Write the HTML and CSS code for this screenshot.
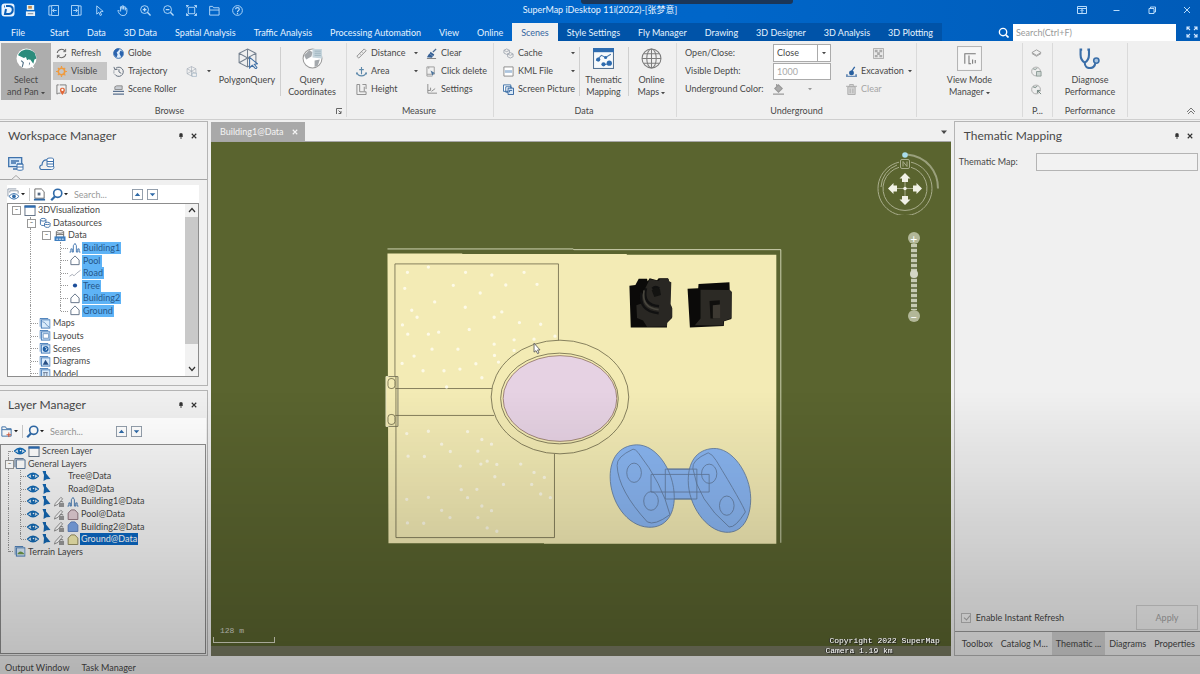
FILE: index.html
```html
<!DOCTYPE html>
<html lang="en">
<head>
<meta charset="utf-8">
<title>SuperMap iDesktop 11i(2022)</title>
<link rel="stylesheet" href="styles.css">
</head>
<body>
<svg class="defs" aria-hidden="true">
  <symbol id="caret" viewBox="0 0 6 6"><path d="M0 1.500h6L3 5z" fill="currentColor"/></symbol>
  <symbol id="close" viewBox="0 0 8 8"><path d="M1 1l6 6M7 1L1 7" stroke="currentColor" stroke-width="1.500" fill="none"/></symbol>
  <symbol id="pin" viewBox="0 0 8 8"><path d="M2.500 1h3v3h-3zM1.500 4.500h5M4 4.500V8" stroke="currentColor" stroke-width="1.200" fill="currentColor"/></symbol>
  <symbol id="magnifier" viewBox="0 0 16 16"><circle cx="9.500" cy="6.500" r="5" fill="none" stroke="currentColor" stroke-width="2"/><path d="M6 10.500L1.500 15" stroke="currentColor" stroke-width="2.800"/></symbol>
  <symbol id="up" viewBox="0 0 12 12"><rect x=".5" y=".5" width="11" height="11" fill="#fff" stroke="#8c98a6"/><path d="M3 7.500l3-3.500 3 3.500z" fill="#2f6aa8"/></symbol>
  <symbol id="down" viewBox="0 0 12 12"><rect x=".5" y=".5" width="11" height="11" fill="#fff" stroke="#8c98a6"/><path d="M3 4.500l3 3.500 3-3.500z" fill="#2f6aa8"/></symbol>
  <symbol id="window" viewBox="0 0 12 12"><rect x=".5" y="1" width="11" height="10.500" fill="#fff" stroke="#5b6b80"/><path d="M0 .5h12v2.500H0z" fill="#2d6bb0"/></symbol>
  <symbol id="house" viewBox="0 0 12 12"><path d="M1.500 10.500V5.500L6 1l4.500 4.500v5z" fill="#fff" stroke="#5c6c82"/></symbol>
  <symbol id="model" viewBox="0 0 12 12"><path d="M0 11h1.500V7.500H3V11h1.200V4L6 1.500 7.500 4v7H9V7.500h1.500V11H12" fill="none" stroke="#2d67a8" stroke-width=".9"/></symbol>
  <symbol id="road" viewBox="0 0 12 12"><path d="M0 9l3-2 2 1.500L8 5.500 12 2.500" fill="none" stroke="#a3a9b3"/></symbol>
  <symbol id="dot" viewBox="0 0 12 12"><circle cx="6" cy="6" r="2.300" fill="#1d4e9a"/></symbol>
  <symbol id="pages" viewBox="0 0 12 12"><path d="M.5 9.500v-9h9" fill="none" stroke="#3b75b5"/><rect x="2" y="2" width="9.500" height="9" fill="#d9ebfb" stroke="#3b75b5"/></symbol>
  <symbol id="sources" viewBox="0 0 12 12"><g fill="#fff" stroke="#3c6fa8"><path d="M1 3v5c0 1.800 6 1.800 6 0V3"/><ellipse cx="4" cy="3" rx="3" ry="1.500"/><path d="M5.500 7v3c0 1.800 6 1.800 6 0V7"/><ellipse cx="8.500" cy="7" rx="3" ry="1.300"/></g></symbol>
  <symbol id="db" viewBox="0 0 12 12"><path d="M2 2v6h8V2" fill="#fff" stroke="#666"/><ellipse cx="6" cy="2" rx="4" ry="1.500" fill="#fff" stroke="#666"/><path d="M2 5h8" stroke="#666"/><path d="M0 7h12v5H0z" fill="#3f7fc0"/><path d="M2 10h2M5 10h2M8 10h2" stroke="#fff"/></symbol>
  <symbol id="eye" viewBox="0 0 12 8"><path d="M.5 4Q6-1.500 11.500 4 6 9.500.5 4z" fill="#fff" stroke="#146bb5" stroke-width="1.300"/><circle cx="6" cy="4" r="2.400" fill="#146bb5"/><circle cx="6.500" cy="3.500" r=".8" fill="#fff"/></symbol>
  <symbol id="pick" viewBox="0 0 10 10"><path d="M1.500 0h3.500v2.500L9.500 8l-4 .3L2.500 10l.5-6z" fill="#1467b2"/></symbol>
  <symbol id="edit" viewBox="0 0 12 12"><path d="M1 11l1-3 6-6.500 2 1.500-5 6z" fill="#fff" stroke="#8d8d8d"/><path d="M6 7.500h5.500V12H6z" fill="#999"/><path d="M7.500 7V6h2.500v1" stroke="#888" fill="none"/></symbol>
  <symbol id="globe" viewBox="0 0 20 20"><circle cx="10" cy="10" r="9" fill="none" stroke="currentColor"/><ellipse cx="10" cy="10" rx="4.500" ry="9" fill="none" stroke="currentColor"/><path d="M1 10h18M10 1v18M2.500 5.500h15M2.500 14.500h15" stroke="currentColor" fill="none"/></symbol>
  <symbol id="cube" viewBox="0 0 20 20"><path d="M10 1l8 4v9l-8 4-8-4V5zM2 5l8 4.500L18 5M10 9.500V18M2 14l8-4.500M10 1v8.500l8 4.500" fill="none" stroke="currentColor"/></symbol>
  <symbol id="spin" viewBox="0 0 12 12"><path d="M1.300 5.500A4.800 4.800 0 0 1 10 3.500M10.700 6.500A4.800 4.800 0 0 1 2 8.500" fill="none" stroke="#666" stroke-width="1.100"/><path d="M10.500 1v3H8M1.500 11V8H4" fill="none" stroke="#666"/></symbol>
</svg>

<header class="chrome">
  <div class="titlebar">
    <div class="quick">
      <svg class="logo" viewBox="0 0 14 14"><rect x=".5" y=".5" width="13" height="13" rx="3" fill="#eaf5ff"/><path d="M5 3h3c5 0 5 7 0 8H4l1-5M3 3.500h.8" stroke="#0a5fb8" stroke-width="2" fill="none"/></svg>
      <button aria-label="Save"><svg viewBox="0 0 12 12"><path d="M2 0h8v5.500H2z" fill="#dff0f5"/><path d="M3.500 1h4v3h-4z" fill="#c48a4a"/><path d="M1 7h10v5H1z" fill="#e8f1f7"/><path d="M3 9.500h6" stroke="#6a7d92"/></svg></button>
      <button aria-label="Back"><svg viewBox="0 0 12 12"><path d="M4 1H1v10h3M4 .5h7.500v11H4zM9.500 6H5M7 4L5 6l2 2"/></svg></button>
      <button aria-label="Forward"><svg viewBox="0 0 12 12"><path d="M8 1h3v10H8M.5.5H8v11H.5zM2.500 6H7M5 4l2 2-2 2"/></svg></button>
      <button aria-label="Pointer"><svg viewBox="0 0 12 12"><path d="M3 1v9l2.300-2 1.500 3.500 1.500-.7L6.800 7.500 10 7z"/></svg></button>
      <button aria-label="Pan"><svg viewBox="0 0 12 12"><path d="M3 7L1.500 5.500C.5 6 1.500 8 3 10c1.500 2 6 2 7 0 1-2 1-5 .5-6.500H9V6M9 5V2H7.200v3M7.200 4V1H5.500v4M5.500 4V2H3.700l.3 5"/></svg></button>
      <button aria-label="Zoom in"><svg viewBox="0 0 12 12"><circle cx="5" cy="5" r="4.300"/><path d="M8 8l3.500 3.500M5 3v4M3 5h4" stroke-width="1.500"/></svg></button>
      <button aria-label="Zoom out"><svg viewBox="0 0 12 12"><circle cx="5" cy="5" r="4.300"/><path d="M8 8l3.500 3.500M3 5h4" stroke-width="1.500"/></svg></button>
      <button aria-label="Full extent"><svg viewBox="0 0 12 12"><path d="M2.500 2.500h7v7h-7zM0 3V.5h3M9 .5h2.500V3M11.500 9v2.500H9M3 11.500H.5V9M.5.5l2 2M11.500.5l-2 2M11.500 11.500l-2-2M.5 11.500l2-2"/></svg></button>
      <button aria-label="Open"><svg viewBox="0 0 12 12"><path d="M.7 11V1.500H4l1 1.500h6v8zM.7 5.500H11"/></svg></button>
      <button aria-label="Help"><svg viewBox="0 0 12 12"><circle cx="6" cy="6" r="5.300"/><path d="M4 4.700c0-2.500 4-2.300 4 0C8 6 6 6 6 7.500M6 8.500V10" stroke-width="1.300"/></svg></button>
    </div>
    <h1 class="app-title">SuperMap iDesktop 11i(2022)-[张梦意]</h1>
    <div class="win-controls">
      <button aria-label="Ribbon options"><svg viewBox="0 0 10 10"><path d="M.5 1.500h9v7h-9zM.5 3.500h9M5 8V4.500M3.500 6L5 4.500 6.500 6"/></svg></button>
      <button aria-label="Minimize"><svg viewBox="0 0 10 10"><path d="M1.500 5.500h6"/></svg></button>
      <button aria-label="Restore"><svg viewBox="0 0 10 10"><path d="M2 3.500h5v5H2zM3.500 3.500V2h5v5H7"/></svg></button>
      <button aria-label="Close"><svg viewBox="0 0 10 10"><path d="M2 2l6 6M8 2L2 8"/></svg></button>
    </div>
  </div>
  <div class="notch"></div>
  <nav class="tabs">
    <a class="file" href="#">File</a><a href="#">Start</a><a href="#">Data</a><a href="#">3D Data</a><a href="#">Spatial Analysis</a><a href="#">Traffic Analysis</a><a href="#">Processing Automation</a><a href="#">View</a><a href="#">Online</a><a class="active" href="#">Scenes</a>
    <div class="context"><a href="#">Style Settings</a><a href="#">Fly Manager</a><a href="#">Drawing</a><a href="#">3D Designer</a><a href="#">3D Analysis</a><a href="#">3D Plotting</a></div>
    <div class="find">
      <svg viewBox="0 0 12 12"><circle cx="5.500" cy="5.500" r="4" fill="none" stroke="#fff" stroke-width="1.500"/><path d="M8.500 8.500l3 3" stroke="#fff" stroke-width="1.800"/></svg>
      <input type="text" placeholder="Search(Ctrl+F)" aria-label="Search commands">
      <button aria-label="Full screen"><svg viewBox="0 0 12 12"><path d="M1 4V1h3M8 1h3v3M11 8v3H8M4 11H1V8M1 1l3 3M11 1L8 4M11 11L8 8M1 11l3-3" fill="none" stroke="#d5e9ff" stroke-width="1.100"/></svg></button>
    </div>
  </nav>
</header>

<section class="ribbon">
  <div class="group browse">
    <div class="tools">
      <button class="big pressed"><svg viewBox="0 0 20 20"><circle cx="10" cy="10" r="9.500" fill="#fff"/><path d="M2 7C4 1 13-1 18 5l1.500 5-2 1-1 4-3-4-3 .5-1-3-2 1z" fill="#2b8c7c"/><path d="M5 12l2 2-1 4M13 14l-1 3" stroke="#4a6a80" fill="none"/><path d="M12 11v7l2-2 3 3" fill="none" stroke="#fff"/></svg><span>Select<br>and Pan <svg class="caret"><use href="#caret"/></svg></span></button>
      <div class="stack s-a">
        <button class="cmd"><svg><use href="#spin"/></svg>Refresh</button>
        <button class="cmd pressed"><svg viewBox="0 0 12 12"><circle cx="6" cy="6" r="3.500" fill="none" stroke="#f09a3c" stroke-width="1.800"/><path d="M6 0v2M6 10v2M0 6h2M10 6h2M2 2l1.200 1.200M9 9l1.200 1.200M10 2L9 3.200M2 10l1.200-1.200" stroke="#f09a3c" stroke-width="1.300"/></svg>Visible</button>
        <button class="cmd"><svg viewBox="0 0 12 12"><path d="M3 1H1v10l2-1h2M4 1h7v9H9" fill="none" stroke="#777"/><path d="M7 12C2 6 5 4 7 4s5 2 0 8z" fill="#e0683a"/><circle cx="7" cy="6.500" r="1.200" fill="#fff"/></svg>Locate</button>
      </div>
      <div class="stack s-b">
        <button class="cmd"><svg viewBox="0 0 12 12"><circle cx="6" cy="6" r="5.300" fill="#dcebfa" stroke="#2d66a8"/><path d="M1 4C2 1 5 0 7 1L6 3 4 5l1 2-1 3C1 9 .5 6 1 4zM8 3l3 1v4L9 10 7 6z" fill="#2a63ae"/></svg>Globe</button>
        <button class="cmd"><svg viewBox="0 0 12 12"><path d="M3 2.500A5 5 0 1 1 2 9M1 1l1 3 3-.5M6.500 3.500v3L9 8M1 5v1M1 7v1" fill="none" stroke="#5a6675"/></svg>Trajectory</button>
        <button class="cmd"><svg viewBox="0 0 12 12"><path d="M2 6V3l2-1h6v4z" fill="#c9cdd3" stroke="#888"/><path d="M0 8h12M0 11h12" stroke="#59708e" stroke-width="1.300"/></svg>Scene Roller</button>
      </div>
      <button class="cmd cube-cmd" aria-label="Box clip"><svg viewBox="0 0 20 20" color="#96a2af"><use href="#cube"/><path d="M11 13h8v6h-8z" fill="#f0f0f0" stroke="#8ca3b8"/></svg><svg class="caret"><use href="#caret"/></svg></button>
      <button class="big polygon"><svg viewBox="0 0 20 20" color="#75818f"><use href="#cube"/><path d="M12 9v10l2.500-2.500L18 20l1-1.500-2.500-3 3-.5z" fill="#f0f0f0" stroke="#3f6fa5"/></svg><span>PolygonQuery</span></button>
      <button class="big ruled query"><svg viewBox="0 0 20 20"><circle cx="10" cy="10" r="9" fill="#fff" stroke="#9a9a9a"/><path d="M2 7l5-5 3 2-1 4-5 3zM12 12l5-1-2 6-3 1z" fill="#a4a8ac"/><path d="M10 1h9v9l-9-1z" fill="#c4d4dc"/><path d="M12 3h6M12 5h6M12 7h6" stroke="#92a9b5" stroke-width=".7"/></svg><span>Query<br>Coordinates</span></button>
    </div>
    <h2>Browse</h2>
    <button class="launcher" aria-label="Browse options"><svg viewBox="0 0 6 6"><path d="M.5 6V.5H6M2.500 2.500L5 5M5 3v2.500H2.500" fill="none" stroke="#666"/></svg></button>
  </div>

  <div class="group measure">
    <div class="tools">
      <div class="stack s-c">
        <button class="cmd"><svg viewBox="0 0 12 12"><path d="M1 9l8-8 2 2-8 8zM4 6l1 1M6 4l1 1" fill="none" stroke="#888"/></svg>Distance<svg class="caret"><use href="#caret"/></svg></button>
        <button class="cmd"><svg viewBox="0 0 12 12"><path d="M6 1v8M3.500 4h5M1 7c1 5 9 5 10 0M1 7l-.5 2M11 7l.5 2" fill="none" stroke="#5c88aa" stroke-width="1.200"/></svg>Area<svg class="caret"><use href="#caret"/></svg></button>
        <button class="cmd"><svg viewBox="0 0 12 12"><path d="M1 .5h3v8h7v3H1zM7 .5h4v5M9 8V3" fill="none" stroke="#888"/></svg>Height</button>
      </div>
      <div class="stack s-d">
        <button class="cmd"><svg viewBox="0 0 12 12"><path d="M11 1L7.500 4.500" stroke="#4a698f" stroke-width="1.500"/><path d="M5 4l4 3-1 2-4-3zM1 10l2.500-4 4 3-1 1.500z" fill="#355f94"/><path d="M1 11.500h10" stroke="#777"/></svg>Clear</button>
        <button class="cmd"><svg viewBox="0 0 12 12"><path d="M1 1h8v8H1zM3 1v2M1 9v2h6" fill="none" stroke="#999"/><path d="M5 5l5 3-2 .5L7 11z" fill="#4c749c"/></svg>Click delete</button>
        <button class="cmd"><svg viewBox="0 0 12 12"><path d="M2 0v10h10M2 7h3V4M6 8l4-3" fill="none" stroke="#888"/></svg>Settings</button>
      </div>
    </div>
    <h2>Measure</h2>
  </div>

  <div class="group data">
    <div class="tools">
      <div class="stack s-e">
        <button class="cmd"><svg viewBox="0 0 12 12"><path d="M4 1l3 1.500v3L4 7 1 5.500v-3zM8 5l3 1.500v3L8 11 5 9.500v-3zM1 2.500L4 4l3-1.500M5 6.500L8 8l3-1.500" fill="none" stroke="#a5acb5"/></svg>Cache<svg class="caret"><use href="#caret"/></svg></button>
        <button class="cmd"><svg viewBox="0 0 12 12"><path d="M1 1h10v10H1z" fill="#fff" stroke="#888"/><path d="M2 4.500h8v3H2z" fill="#acc4dd"/></svg>KML File<svg class="caret"><use href="#caret"/></svg></button>
        <button class="cmd"><svg viewBox="0 0 12 12"><path d="M.5 1h8v7h-8zM3 3h6v6H3z" fill="#fff" stroke="#356aa3"/><path d="M5.500 4.500h6v7h-6z" fill="#d8e8f6" stroke="#2d5f9c"/><path d="M7 9V7h3" stroke="#2d5f9c" fill="none"/></svg>Screen Picture</button>
      </div>
      <button class="big ruled thematic"><svg viewBox="0 0 20 20"><rect x=".5" y=".5" width="19" height="19" fill="#f7fafc" stroke="#547395"/><path d="M0 0h20v4H0z" fill="#2e6cb0"/><path d="M3 12l5-5 4 2 5-3M9 16l7-1" stroke="#4978ab" fill="none"/><circle cx="5" cy="11" r="2" fill="#2e6cb0"/><circle cx="12" cy="9" r="1.500" fill="#2e6cb0"/><circle cx="15.500" cy="14.500" r="2.500" fill="#2e6cb0"/><circle cx="10" cy="15.500" r="2" fill="#2e6cb0"/></svg><span>Thematic<br>Mapping</span></button>
      <button class="big ruled online"><svg color="#7c7c7c"><use href="#globe"/></svg><span>Online<br>Maps <svg class="caret"><use href="#caret"/></svg></span></button>
    </div>
    <h2>Data</h2>
  </div>

  <div class="group underground">
    <div class="tools">
      <div class="form">
        <label for="oc">Open/Close:</label><span class="combo"><select id="oc"><option>Close</option></select><svg class="caret"><use href="#caret"/></svg></span>
        <label for="depth">Visible Depth:</label><input id="depth" type="text" value="1000" disabled>
        <label for="fill">Underground Color:</label><button id="fill" class="fill" disabled><svg viewBox="0 0 12 12"><path d="M6 1l4 4-4 4-4-4zM4 3V0M0 11h12" fill="#aaa" stroke="#999" stroke-width="1.300"/></svg><svg class="caret"><use href="#caret"/></svg></button>
      </div>
      <div class="stack s-f">
        <button class="cmd mid" aria-label="Transparency"><svg viewBox="0 0 12 12"><path d="M.5.5h11v11H.5z" fill="#e7e7e7" stroke="#aaa"/><path d="M2 2h3v2.500H2zM7 2h3v2.500H7zM4.500 4.500h3v3h-3zM2 7.500h3V10H2zM7 7.500h3V10H7z" fill="#aaa"/></svg></button>
        <button class="cmd"><svg viewBox="0 0 12 12"><path d="M0 12V9h2v1.500h8V9h2v3z" fill="#6e90b8"/><circle cx="6" cy="7.500" r="2.700" fill="#285f9f"/><path d="M6 6l3.500-5" stroke="#285f9f" stroke-width="1.400"/></svg>Excavation<svg class="caret"><use href="#caret"/></svg></button>
        <button class="cmd" disabled><svg viewBox="0 0 12 12"><path d="M2 3h8v8.500H2zM0 2.500h12M4 2V.5h4V2M4.500 5v5M7.500 5v5" fill="#d5d5d5" stroke="#aaa"/></svg>Clear</button>
      </div>
    </div>
    <h2>Underground</h2>
  </div>

  <div class="group viewmode">
    <div class="tools">
      <button class="big framed"><svg viewBox="0 0 24 24"><rect x=".5" y=".5" width="23" height="23" fill="#f6f6f6" stroke="#b5b5b5"/><path d="M7.500 17V7.500H18M11.500 9v8h2M15 17v-4M17.500 13.500v3" fill="none" stroke="#777"/></svg><span>View Mode<br>Manager <svg class="caret"><use href="#caret"/></svg></span></button>
    </div>
  </div>

  <div class="group plot">
    <div class="tools">
      <div class="stack">
        <button class="cmd mid" aria-label="Layer"><svg viewBox="0 0 12 12"><path d="M6 2l5 3-5 3-5-3zM1 6l5 3 5-3" fill="none" stroke="#999"/></svg></button>
        <button class="cmd mid" aria-label="Globe settings"><svg viewBox="0 0 12 12"><circle cx="5.500" cy="6" r="4.800" fill="#eee" stroke="#aaa"/><path d="M2 3l3 1 2-2M6 6h5v5H6z" fill="#ccd5d2" stroke="#8c9a96"/></svg></button>
        <button class="cmd mid" aria-label="Globe search"><svg viewBox="0 0 12 12"><circle cx="5.500" cy="6" r="4.800" fill="#eee" stroke="#aaa"/><path d="M2 3l3 1 2-2M7 7l4 4M7 10V7h3" fill="#ccd5d2" stroke="#70827d"/></svg></button>
      </div>
    </div>
    <h2>P...</h2>
  </div>

  <div class="group perf">
    <div class="tools">
      <button class="big"><svg viewBox="0 0 20 20"><path d="M3 1.500H1.500v5c0 4 1.500 6 4 7.500 2.500-1.500 4-3.500 4-7.500v-5H8M5.500 14c0 7 9 6.500 10 .5" fill="none" stroke="#3a6ea8" stroke-width="2"/><circle cx="16.500" cy="12" r="2.500" fill="#a8c5e2" stroke="#3a6ea8" stroke-width="1.500"/></svg><span>Diagnose<br>Performance</span></button>
    </div>
    <h2>Performance</h2>
  </div>
  <button class="collapse" aria-label="Collapse ribbon"><svg viewBox="0 0 10 8"><path d="M1 5l4-4 4 4M2 7l3-3 3 3" fill="none" stroke="#777"/></svg></button>
</section>

<main class="work">
  <div class="left">
    <section class="panel workspace">
      <header class="panel-head"><h2>Workspace Manager</h2><button aria-label="Pin"><svg><use href="#pin"/></svg></button><button aria-label="Close"><svg><use href="#close"/></svg></button></header>
      <div class="modes">
        <button aria-label="Local"><svg viewBox="0 0 16 14"><path d="M.7.700h13v9h-13zM3 4h8M3 6h5M5 12h4" fill="#d4e6f7" stroke="#3e72ac" stroke-width="1.300"/><path d="M9 7v5.500c0 1 6 1 6 0V7z" fill="#fff" stroke="#3e72ac"/><path d="M9 10h6M9 7h6" stroke="#3e72ac"/></svg></button>
        <button aria-label="Cloud"><svg viewBox="0 0 16 14"><path d="M9 12.500H3C0 12.500 0 8 3 8c0-4 3-5.500 5-5" fill="none" stroke="#3e72ac" stroke-width="1.200"/><path d="M8 2v7c0 1 6.500 1 6.500 0V2c0-1.300-6.500-1.300-6.500 0zM8 4.500h6.500M8 7h6.500M14.500 9c1 2 0 3.500-2 3.500H9" fill="#fff" stroke="#3e72ac"/></svg></button>
      </div>
      <div class="rule"><svg viewBox="0 0 10 5"><path d="M0 4.500h.5L5 .5l4.500 4H10" fill="#f0f0f0" stroke="#a5a5a5"/></svg></div>
      <div class="bar">
        <button aria-label="Display"><svg viewBox="0 0 14 14"><path d="M1 9V1h9M3 5V3h9v3" fill="none" stroke="#8b97a5"/><path d="M2 9q5.500-6 11 0-5.500 6-11 0z" fill="#fff" stroke="#2f6aa8"/><circle cx="7.500" cy="9" r="2" fill="#2f6aa8"/></svg><svg class="caret"><use href="#caret"/></svg></button>
        <button class="sep" aria-label="Sort"><svg viewBox="0 0 14 14"><path d="M2 11V1h7l3 3v7z" fill="#fff" stroke="#666"/><path d="M5 5h3v3H5z" fill="#596a80"/><path d="M1 12.500h12" stroke="#2f6aa8" stroke-width="2"/></svg></button>
        <button class="find-icon" aria-label="Find"><svg><use href="#magnifier"/></svg><svg class="caret"><use href="#caret"/></svg></button>
        <input type="text" placeholder="Search..." aria-label="Search workspace">
        <button aria-label="Previous"><svg class="nav"><use href="#up"/></svg></button><button aria-label="Next"><svg class="nav"><use href="#down"/></svg></button>
      </div>
      <div class="treebox">
        <ul class="tree">
          <li><i class="x"></i><svg><use href="#window"/></svg><span>3DVisualization</span></li>
          <li><i></i><i class="v x"></i><svg><use href="#sources"/></svg><span>Datasources</span></li>
          <li><i></i><i class="v"></i><i class="x"></i><svg><use href="#db"/></svg><span>Data</span></li>
          <li><i></i><i class="v"></i><i></i><i class="v h"></i><svg><use href="#model"/></svg><span class="sel">Building1</span></li>
          <li><i></i><i class="v"></i><i></i><i class="v h"></i><svg><use href="#house"/></svg><span class="sel">Pool</span></li>
          <li><i></i><i class="v"></i><i></i><i class="v h"></i><svg><use href="#road"/></svg><span class="sel">Road</span></li>
          <li><i></i><i class="v"></i><i></i><i class="v h"></i><svg><use href="#dot"/></svg><span class="sel">Tree</span></li>
          <li><i></i><i class="v"></i><i></i><i class="v h"></i><svg><use href="#house"/></svg><span class="sel">Building2</span></li>
          <li><i></i><i class="v"></i><i></i><i class="v h end"></i><svg><use href="#house"/></svg><span class="sel">Ground</span></li>
          <li><i></i><i class="v h"></i><svg viewBox="0 0 12 12"><use href="#pages"/><path d="M3 4c4 0 4 5 8 6" stroke="#6b94bf" fill="none"/></svg><span>Maps</span></li>
          <li><i></i><i class="v h"></i><svg viewBox="0 0 12 12"><use href="#pages"/><path d="M4 4h6v5H4z" fill="#fff" stroke="#6b94bf"/></svg><span>Layouts</span></li>
          <li><i></i><i class="v h"></i><svg viewBox="0 0 12 12"><use href="#pages"/><circle cx="6.700" cy="6.500" r="3.200" fill="#1f5fa5"/><path d="M6 4l2 2-1 2" stroke="#fff" fill="none"/></svg><span>Scenes</span></li>
          <li><i></i><i class="v h"></i><svg viewBox="0 0 12 12"><use href="#pages"/><path d="M3.500 9.500L6.500 4l3.500 5.500z" fill="#274f85"/></svg><span>Diagrams</span></li>
          <li><i></i><i class="v h"></i><svg viewBox="0 0 12 12"><use href="#pages"/><path d="M4 5h5M5 5v4M8 5v4" stroke="#6a7890"/></svg><span>Model</span></li>
        </ul>
        <div class="scroll"><button aria-label="Scroll up"><svg viewBox="0 0 8 8"><path d="M1 6l3-3.500L7 6" fill="none" stroke="#333" stroke-width="1.200"/></svg></button><div class="thumb"></div><button aria-label="Scroll down"><svg viewBox="0 0 8 8"><path d="M1 2l3 3.500L7 2" fill="none" stroke="#333" stroke-width="1.200"/></svg></button></div>
      </div>
    </section>

    <section class="panel layers">
      <header class="panel-head"><h2>Layer Manager</h2><button aria-label="Pin"><svg><use href="#pin"/></svg></button><button aria-label="Close"><svg><use href="#close"/></svg></button></header>
      <div class="bar wide">
        <button aria-label="New group"><svg viewBox="0 0 14 14"><path d="M2 12V2h4l1 2h5v8zM2 5h10" fill="#fff" stroke="#3e72ac"/><path d="M9.500 8v5M7 10.500h5" stroke="#d7502f"/></svg><svg class="caret"><use href="#caret"/></svg></button>
        <button class="sep find-icon" aria-label="Find"><svg><use href="#magnifier"/></svg><svg class="caret"><use href="#caret"/></svg></button>
        <input type="text" placeholder="Search..." aria-label="Search layers">
        <button aria-label="Previous"><svg class="nav"><use href="#up"/></svg></button><button aria-label="Next"><svg class="nav"><use href="#down"/></svg></button>
      </div>
      <div class="layerbox">
        <ul class="tree compact">
          <li><i class="v h start"></i><svg class="eye"><use href="#eye"/></svg><svg><use href="#window"/></svg><span>Screen Layer</span></li>
          <li><i class="v x"></i><svg viewBox="0 0 12 12"><path d="M.5 10V.5H10" fill="none" stroke="#4b6b8f"/><path d="M2 2h9.500v9.500H2z" fill="#fff" stroke="#4b6b8f"/></svg><span>General Layers</span></li>
          <li><i class="v"></i><i class="v h"></i><svg class="eye"><use href="#eye"/></svg><svg class="pick"><use href="#pick"/></svg><b></b><span>Tree@Data</span></li>
          <li><i class="v"></i><i class="v h"></i><svg class="eye"><use href="#eye"/></svg><svg class="pick"><use href="#pick"/></svg><b></b><span>Road@Data</span></li>
          <li><i class="v"></i><i class="v h"></i><svg class="eye"><use href="#eye"/></svg><svg class="pick"><use href="#pick"/></svg><svg><use href="#edit"/></svg><svg><use href="#model"/></svg><span>Building1@Data</span></li>
          <li><i class="v"></i><i class="v h"></i><svg class="eye"><use href="#eye"/></svg><svg class="pick"><use href="#pick"/></svg><svg><use href="#edit"/></svg><svg viewBox="0 0 12 12"><path d="M.7 11.500V4.500L4 1h4l3.300 3.500v7z" fill="#e3cfd6" stroke="#8a6f78"/></svg><span>Pool@Data</span></li>
          <li><i class="v"></i><i class="v h"></i><svg class="eye"><use href="#eye"/></svg><svg class="pick"><use href="#pick"/></svg><svg><use href="#edit"/></svg><svg viewBox="0 0 12 12"><path d="M.7 11.500V4.500L4 1h4l3.300 3.500v7z" fill="#7ba5e6" stroke="#5a7fc0"/></svg><span>Building2@Data</span></li>
          <li><i class="v"></i><i class="v h end"></i><svg class="eye"><use href="#eye"/></svg><svg class="pick"><use href="#pick"/></svg><svg><use href="#edit"/></svg><svg viewBox="0 0 12 12"><path d="M.7 11.500V4.500L4 1h4l3.300 3.500v7z" fill="#f3ecb0" stroke="#8d8658"/></svg><span class="current">Ground@Data</span></li>
          <li><i class="v h end"></i><svg viewBox="0 0 12 12"><use href="#pages"/><path d="M3 9c2-4 5-4 8 0z" fill="#6f9a4a"/></svg><span>Terrain Layers</span></li>
        </ul>
      </div>
    </section>
  </div>

  <section class="center">
    <div class="doc-tabs"><a href="#" class="doc">Building1@Data <svg><use href="#close"/></svg></a><button aria-label="Window list"><svg class="caret"><use href="#caret"/></svg></button></div>
    <div class="viewport">
      <svg class="scene" viewBox="211 142 742 514" preserveAspectRatio="xMidYMid meet">
        <path d="M388 248.500h186l1 .7h207.500v294" fill="none" stroke="#cfd3b2"/>
        <path d="M388 253h75v.5h165v.7h150v290H545v-.5H389z" fill="#f3ebb5"/>
        <path d="M386.500 376.500h12v50h-12z" fill="#f3ebb4" stroke="#e6e4c4"/>
        <g fill="none" stroke="#6b6647" stroke-width=".8">
          <path d="M395.500 263.500h164V341M395.500 263.500V376M396.500 427v111h159v-84M396 388.500h97M396 415.500h99"/>
          <path d="M389 376.500h9.500v50H389M396.500 376v51"/>
          <rect x="388.500" y="378.500" width="7" height="10" rx="3"/><rect x="388.500" y="414.500" width="7" height="10" rx="3"/>
        </g>
        <ellipse cx="561" cy="397" rx="69" ry="57" fill="#f3ebb4" stroke="#6b6647" stroke-width=".8"/>
        <ellipse cx="560.500" cy="398.500" rx="59" ry="45.500" fill="#f3ebb4" stroke="#6b6647" stroke-width=".8"/>
        <ellipse cx="561" cy="398.500" rx="57" ry="43" fill="#e6d2e3" stroke="#8d6f63" stroke-width=".8"/>
        <g transform="translate(380 240) scale(.3333)" stroke="#fffdf0" stroke-width="10" stroke-linecap="round">
          <path opacity=".85" d="M84 96h.1M147 80h.1M259 96h.1M338 104h.1M435 96h.1M474 132h.1M380 134h.1M222 135h.1M76 144h.1M303 158h.1M166 185h.1M258 201h.1M97 210h.1M113 231h.1M368 215h.1M345 231h.1M421 247h.1M485 252h.1M69 254h.1M270 268h.1M85 282h.1M147 282h.1M178 276h.1M405 299h.1M465 297h.1M345 312h.1M158 327h.1M236 327h.1M405 331h.1M104 348h.1M346 346h.1M68 370h.1M290 371h.1M131 392h.1M194 392h.1M242 387h.1M308 413h.1M202 441h.1M358 366h.1M528 288h.1"/>
          <path d="M82 581h.1M147 574h.1M265 575h.1M308 599h.1M187 613h.1M337 613h.1M213 635h.1M296 634h.1M86 649h.1M135 650h.1M324 664h.1M305 673h.1M353 674h.1M243 679h.1M425 673h.1M465 698h.1M347 711h.1M496 713h.1M373 734h.1M458 734h.1M246 750h.1M293 749h.1M485 763h.1M265 774h.1M514 774h.1M147 773h.1M82 779h.1M308 799h.1M187 812h.1M337 813h.1M212 834h.1M296 834h.1M84 850h.1M133 851h.1M324 865h.1M353 875h.1" opacity=".8"/>
        </g>
        <g transform="translate(580 240) scale(.3333)">
          <path d="M152 136l18-2 10-19h25l2 8 6-9 22 6 5-6h28l2 9 6 2-2 66 6 12v30l-15 15v14H156z" fill="#0b0a09"/>
          <path d="M213 117l27 4 5-6h25l2 9 6 2-2 66 5 12v27l-15 15-1 13-60 1-12-19-18-8-2-38 15-5 2-27z" fill="#292723"/>
          <path d="M221 145q10-10 21 0M188 156q-9 57 52 63M202 144q-12 49 39 54" fill="none" stroke="#111" stroke-width="7"/><path d="M196 150q-9 53 44 58" fill="none" stroke="#48463e" stroke-width="5"/>
          <path d="M219 150l10-9 15 6 3 17-20 6z" fill="#131311"/>
          <path d="M327 145l32-1 1-13 93-5 1 27 6 2-1 81-22 7-1 14-102 5z" fill="#0b0a09"/>
          <path d="M366 148l88 1 5 4v80l-24 10-1 13-85-1 17-20z" fill="#2c2a25"/><path d="M393 182l31-2v22h-20v33h-8z" fill="#100f0d"/><path d="M403 195l22-2v40h-22z" fill="#3d3932"/>
          <g stroke="#627b9e" stroke-width="2.500" fill="#8ab6f2">
            <path d="M260 688h95v90h-95z"/>
            <path d="M173 615c60-2 114 78 114 158 0 52-26 92-77 90C144 860 94 785 94 711c0-52 25-94 79-96z"/>
            <path d="M404 626c56-4 112 74 113 150 0 60-25 106-76 102-58-5-112-80-112-156 0-54 24-93 75-96z"/>
            <g fill="none"><path d="M163 628q-50 23-48 49 3 75 91 170 22 12 68-22Q250 730 178 638q-8-10-15-10z"/><path d="M389 639q-50 22-46 47 13 95 109 176 19 3 49-45-10-27-88-155-12-20-24-23z"/><ellipse cx="166" cy="699" rx="22" ry="29"/><ellipse cx="217" cy="784" rx="22" ry="28"/><ellipse cx="392" cy="702" rx="23" ry="29"/><ellipse cx="445" cy="798" rx="22" ry="29"/><path d="M217 704h175v53H217zM260 688h95v90h-95z"/></g>
          </g>
        </g>
        <path d="M535 343v9l2-1.500 1.500 3 1.500-.7-1.500-3h2.500z" fill="#fff" stroke="#4c4c4c" stroke-width=".8"/>
      </svg>
      <div class="hud">
        <svg class="compass" viewBox="0 0 64 64" role="img" aria-label="Compass">
          <g fill="none" stroke="#a9ad8c"><path d="M22 11.200a27 27 0 1 0 12 0M22 16.300a22 22 0 1 0 12 0M20 14a24.500 24.500 0 0 0-16 22"/><path d="M30 3.500c20 2 31 17 31 34" stroke-width="2" stroke="#9aa07c"/><path d="M28 28v20M18 37.500h21"/><rect x="23.500" y="8.500" width="9" height="9" rx="1.500" fill="#5a642f"/><path d="M26 15.500v-5l4 5v-5"/></g>
          <circle cx="28" cy="4" r="2.800" fill="#a9dcec"/><g fill="#f1f1e6"><path d="M28 22l5.500 5.500H31v3.500h-6v-3.500h-2.500zM28 54l-5.500-5.500H25V45h6v3.500h2.500zM11 37.500L16.500 32v2.500H20v6h-3.500V43zM45 37.500L39.500 32v2.500H36v6h3.500V43z"/><circle cx="28" cy="37.500" r="1.700"/></g>
        </svg>
        <div class="zoomer"><button aria-label="Zoom in">+</button><input type="range" min="0" max="100" value="56" aria-label="Zoom level"><button aria-label="Zoom out">−</button></div>
      </div>
      <div class="scale">128 m<span></span></div>
      <div class="credit"><p>Copyright 2022 SuperMap</p><p class="camera">Camera 1.19 km</p></div>
    </div>
  </section>

  <section class="panel right">
    <header class="panel-head"><h2>Thematic Mapping</h2><button aria-label="Pin"><svg><use href="#pin"/></svg></button><button aria-label="Close"><svg><use href="#close"/></svg></button></header>
    <div class="field"><label for="tm">Thematic Map:</label><input id="tm" type="text"></div>
    <div class="apply"><label><input type="checkbox" checked disabled>Enable Instant Refresh</label><button disabled>Apply</button></div>
    <nav class="dock"><a href="#">Toolbox</a><a href="#">Catalog M...</a><a href="#" class="active">Thematic ...</a><a href="#">Diagrams</a><a href="#">Properties</a></nav>
  </section>
</main>

<footer class="status"><a href="#">Output Window</a><a href="#">Task Manager</a></footer>
</body>
</html>
```

FILE: styles.css
```css
* { box-sizing: border-box; margin: 0; padding: 0; }
body { display: flex; flex-direction: column; min-height: 100vh; background: #f0f0f0; color: #484848; font: 9px/12px Lato, "Noto Sans", "Noto Sans CJK SC", sans-serif; }
body::after { content: ""; position: fixed; inset: 58% 0 0; background: linear-gradient(rgba(0,0,0,0), rgba(0,0,0,.25)); pointer-events: none; }
.defs { position: absolute; width: 0; height: 0; }
button, input, select { font: inherit; color: inherit; border: 0; background: none; }
input, select { min-width: 0; appearance: none; outline: 0; }
a { color: inherit; text-decoration: none; white-space: nowrap; }
h1, h2 { font: inherit; }
ul { list-style: none; }
svg { flex: none; }
.caret { width: 4px; height: 4px; }

/* window frame */
.chrome { position: relative; background: linear-gradient(90deg, #0064c8, #0066c9 60%, #005bb8); color: #e6f3ff; }
.titlebar { display: grid; grid-template-columns: 1fr auto 1fr; align-items: center; height: 23px; padding-bottom: 3px; }
.quick { display: flex; align-items: center; gap: 12px; padding-left: 1px; }
.quick button { width: 11px; height: 12px; }
.quick svg, .win-controls svg { display: block; width: 11px; height: 11px; fill: none; stroke: #b9dcfb; }
.quick button:first-of-type svg { stroke: none; }
.quick .logo { width: 14px; height: 14px; margin-right: -2px; stroke: none; }
.app-title { white-space: nowrap; }
.win-controls { display: flex; justify-content: flex-end; gap: 25px; padding-right: 8px; }
.win-controls button { height: 11px; }
.win-controls svg { width: 10px; height: 10px; }
.notch { position: absolute; top: 0; left: 50%; width: 212px; height: 4px; margin-left: -19px; border-radius: 0 0 3px 3px; background: #1b3658; }
.tabs { display: flex; height: 18px; line-height: 19px; }
.tabs a { padding: 0 9px; }
.tabs .file { padding: 0 16px 0 11px; }
.tabs .active { background: #f0f0f0; color: #3565a0; }
.context { display: flex; background: #0053a8; }
.find { display: flex; align-items: center; margin-left: auto; flex: 0 1 202px; }
.find > svg { width: 11px; height: 11px; margin-right: 4px; }
.find input { flex: 1; height: 17px; padding: 0 3px; background: #fff; color: #555; }
.find button { width: 24px; height: 12px; padding-left: 10px; }
.find button svg { display: block; width: 12px; height: 12px; }
::placeholder { color: #999; opacity: 1; }

/* ribbon */
.ribbon { display: flex; height: 79px; border-bottom: 1px solid #cfcfcf; padding-top: 2px; }
.group { position: relative; display: flex; flex-direction: column; flex: none; border-right: 1px solid #dadada; margin-bottom: 2px; }
.group h2 { text-align: center; line-height: 12px; margin-top: 5px; padding-right: 8px; }
.plot h2, .perf h2 { padding: 0; }
.tools { display: flex; height: 57px; align-items: flex-start; }
.browse { width: 347px; padding-left: 1px; }
.measure { width: 147px; padding-left: 6px; }
.data { width: 183px; padding-left: 6px; }
.underground { width: 240px; padding-left: 8px; }
.viewmode { width: 106px; }
.plot { width: 30px; }
.perf { width: 75px; }
.viewmode .tools, .plot .tools, .perf .tools { justify-content: center; }
.stack { display: grid; grid-auto-rows: 18px; padding-top: 1px; }
.s-a { width: 54px; margin: 0 3px 0 2px; }
.s-b { width: 73px; }
.s-c { width: 70px; }
.s-d { width: 68px; }
.s-e { width: 79px; }
.s-f { width: 72px; }
.cmd { display: flex; align-items: center; gap: 4px; padding: 0 5px 0 3px; text-align: left; white-space: nowrap; }
.cmd > svg { width: 11px; height: 11px; }
.cmd > svg.caret { width: 4px; height: 4px; margin-left: auto; }
.cmd:disabled { color: #a5a5a5; }
.mid { justify-content: center; }
.pressed { background: #c6c6c6; }
.cube-cmd { width: 31px; height: 18px; margin: 19px 0 0; padding: 0 3px; }
.big { display: flex; flex-direction: column; align-items: center; height: 57px; padding-top: 5px; white-space: nowrap; }
.big > svg { width: 21px; height: 21px; margin-bottom: 5px; }
.big.pressed { width: 50px; background: #adadad; }
.ruled { position: relative; }
.ruled::before { content: ""; position: absolute; left: 0; top: 4px; bottom: 4px; border-left: 1px solid #cfcfcf; }
.polygon { width: 66px; }
.query { width: 64px; }
.thematic { width: 49px; }
.online { width: 47px; }
.framed { padding-top: 3px; }
.framed > svg { width: 25px; height: 25px; margin-bottom: 3px; }
.launcher { position: absolute; right: 4px; bottom: 1px; width: 6px; height: 10px; }
.launcher svg { display: block; width: 6px; height: 6px; }
.form { display: grid; grid-template-columns: 88px 58px; grid-auto-rows: 18px; align-items: center; width: 158px; padding-top: 1px; white-space: nowrap; }
.combo { position: relative; height: 18px; border: 1px solid #ababab; background: #fff; }
.combo select { width: 100%; height: 16px; padding-left: 3px; }
.combo .caret { position: absolute; right: 4px; top: 6px; }
.combo::after { content: ""; position: absolute; right: 12px; top: 0; bottom: 0; border-left: 1px solid #ababab; }
.form input { height: 17px; padding-left: 3px; border: 1px solid #ababab; background: #fff; color: #aaa; }
.fill { display: flex; align-items: center; gap: 24px; color: #999; }
.fill > svg:first-child { width: 11px; height: 11px; }
.collapse { margin: auto 4px 4px auto; width: 10px; height: 9px; }
.collapse svg { display: block; width: 10px; height: 8px; }

/* work area */
.work { display: flex; flex: 1; gap: 3px; min-height: 0; }
.left { display: flex; flex-direction: column; gap: 4px; flex: 0 0 208px; padding-top: 1px; }
.panel { display: flex; flex-direction: column; border: 1px solid #b4b4b4; border-left: 0; background: #f0f0f0; }
.panel-head { display: flex; align-items: center; height: 27px; padding: 0 7px 0 8px; }
.panel-head h2 { flex: 1; font-size: 12px; line-height: 16px; }
.panel-head button { width: 13px; height: 8px; }
.panel-head svg { display: block; width: 6px; height: 6px; margin: 1px auto; color: #333; }
.workspace { height: 265px; }
.modes { display: flex; gap: 15px; padding: 7px 8px 0; }
.modes button { width: 16px; height: 15px; }
.modes svg { display: block; width: 16px; height: 14px; }
.rule { height: 5px; margin: 4px 0 5px; border-bottom: 1px solid #a5a5a5; padding-left: 11px; }
.rule svg { display: block; width: 10px; height: 5px; }
.bar { display: flex; align-items: center; height: 18px; margin: 0 8px 0 7px; background: #fff; gap: 4px; flex: none; }
.bar.wide { height: 26px; margin: 0 1px 0 0; }
.bar button { display: flex; align-items: center; gap: 1px; color: #222; }
.bar button svg { width: 13px; height: 13px; }
.bar button .nav { width: 11px; height: 11px; }
.bar button .caret { width: 4px; height: 4px; }
.bar .find-icon > svg:first-child { color: #2f6aa8; }
.bar .sep { border-left: 1px solid #ccc; padding-left: 3px; }
.bar input { width: 56px; height: 15px; padding-left: 2px; }
.wide input { width: 64px; }
.treebox { display: flex; flex: 1; min-height: 0; margin: 0 8px 8px 7px; border: 1px solid #8d8d8d; background: #fff; overflow: hidden; }
.tree { flex: 1; display: grid; grid-auto-rows: 1fr; height: 176px; }
.tree li { display: flex; align-items: center; white-space: nowrap; min-height: 0; }
.tree i { position: relative; align-self: stretch; width: 15px; flex: none; }
.tree i.v::before { content: ""; position: absolute; left: 7px; top: 0; bottom: 0; border-left: 1px dotted #999; }
.tree i.end::before { bottom: 50%; }
.tree i.start::before { top: 50%; }
.tree i.h::after { content: ""; position: absolute; left: 8px; right: 0; top: 6px; border-top: 1px dotted #999; }
.tree i.x::after { content: "–"; position: absolute; left: 4px; top: 2px; width: 7px; height: 7px; border: 1px solid #999; background: #fff; font-size: 7px; line-height: 4px; text-align: center; }
.tree li > svg { width: 12px; height: 11px; margin: 0 1px; }
.tree li > span { padding: 0 1px; line-height: 12px; }
.tree .sel { background: #5eb3f6; color: #26578a; }
.tree .current { background: #0b68c4; color: #fff; }
.scroll { display: flex; flex-direction: column; flex: 0 0 13px; background: #f2f2f2; }
.scroll button { height: 13px; }
.scroll svg { width: 8px; height: 8px; }
.thumb { flex: 0 0 127px; margin-bottom: auto; background: #c9c9c9; }
.layers { flex: 1; }
.layerbox { flex: 1; border: 1px solid #8d8d8d; margin: 0 1px 1px 0; background: #f8f8f8; }
.compact { height: 113px; }
.compact i { width: 13px; }
.compact i:first-child { width: 12px; }
.compact i.v::before { left: 7px; }
.compact i.x::after { left: 4px; }
.tree.compact .eye { height: 8px; }
.tree.compact .pick { width: 10px; height: 10px; }
.tree.compact b { width: 15px; }

.center { display: flex; flex-direction: column; flex: 1; min-width: 0; }
.doc-tabs { display: flex; justify-content: space-between; height: 22px; padding-top: 2px; border-bottom: 1px solid #a6a6a6; }
.doc { display: flex; align-items: center; gap: 8px; padding: 0 7px 0 9px; background: #a9a9a9; color: #f4f4f4; }
.doc svg { width: 6px; height: 6px; }
.doc-tabs button { width: 14px; }
.doc-tabs .caret { width: 6px; height: 6px; }
.viewport { position: relative; flex: 1; min-height: 0; background: #5a642f; overflow: hidden; }
.viewport::after { content: ""; position: absolute; inset: auto 0 0; height: 10px; background: rgba(160,150,170,.4); }
.scene { position: absolute; left: 0; top: 0; width: 100%; height: 100%; }
.hud { position: absolute; right: 10px; top: 9px; width: 64px; }
.compass { display: block; width: 64px; height: 64px; }
.zoomer { display: flex; flex-direction: column; align-items: center; width: 12px; margin: 17px 0 0 31px; }
.zoomer button { width: 12px; height: 12px; border-radius: 50%; background: #b2b798; color: #fff; font-size: 12px; line-height: 11px; }
.zoomer input { writing-mode: vertical-lr; width: 6px; height: 66px; direction: rtl; background: repeating-linear-gradient(#c6cab2 0 3px, #727a55 3px 5px); }
.zoomer input::-webkit-slider-thumb { appearance: none; width: 8px; height: 8px; border-radius: 50%; background: #d3d6c5; }
.scale { position: absolute; left: 2px; bottom: 13px; width: 62px; padding-left: 7px; font: 8px/12px "Liberation Mono", monospace; color: #d5d5ca; }
.scale span { display: block; height: 6px; margin: 0 0 0 -7px; border: 1px solid #d9d9c4; border-top: 0; }
.credit { position: absolute; z-index: 1; right: 11px; bottom: 0; font: 8px/10px "Liberation Mono", monospace; color: #fff; text-shadow: 1px 1px #222, -1px 0 #333; }
.camera { margin-left: -4px; }

.right { flex: 0 0 244px; margin: 1px 0 0; border-left: 1px solid #b4b4b4; border-right: 0; }
.field { display: flex; align-items: center; justify-content: space-between; padding: 4px 2px 0 4px; }
.field input { width: 162px; height: 18px; border: 1px solid #b4b4b4; background: #f2f2f2; }
.right .panel-head { padding: 0 4px 0 9px; }
.apply { display: flex; align-items: center; justify-content: space-between; margin-top: auto; padding: 0 2px 1px 6px; }
.apply label { display: flex; align-items: center; gap: 5px; }
.apply input { width: 10px; height: 10px; border: 1px solid #bbb; background: #f5f5f5; }
.apply input::before { content: ""; display: block; width: 3px; height: 5px; margin: 0 0 0 3px; border: solid #aaa; border-width: 0 1px 1px 0; transform: rotate(40deg); }
.apply button { width: 62px; height: 25px; border: 1px solid #cfcfcf; background: #f0f0f0; color: #a3a3a3; }
.dock { display: flex; justify-content: space-between; height: 24px; border-top: 1px solid #999; line-height: 23px; padding: 0 1px 0 3px; }
.dock a { padding: 0 4px; }
.dock .active { background: #d2d2d2; }
.status { display: flex; gap: 12px; height: 18px; padding: 6px 5px 0; }
```
